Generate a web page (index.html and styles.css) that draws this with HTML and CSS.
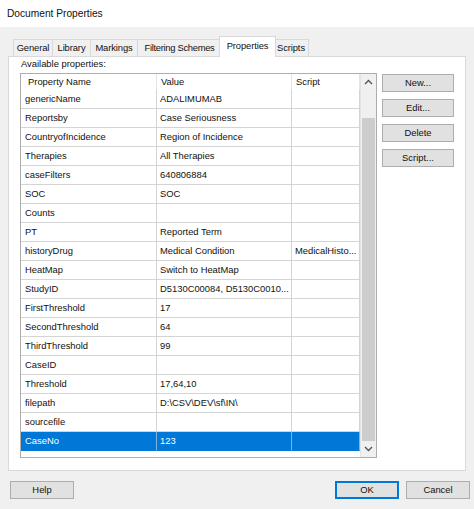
FILE: index.html
```html
<!DOCTYPE html>
<html>
<head>
<meta charset="utf-8">
<title>Document Properties</title>
<link rel="stylesheet" href="styles.css">
</head>
<body>
<div class="window">
  <div class="titlebar">Document Properties</div>
  <div class="dialog">
    <div class="tabs">
      <div class="tab tab-general">General</div>
      <div class="tab tab-library">Library</div>
      <div class="tab tab-markings">Markings</div>
      <div class="tab tab-filtering">Filtering Schemes</div>
      <div class="tab tab-properties active">Properties</div>
      <div class="tab tab-scripts">Scripts</div>
    </div>
    <div class="panel">
      <div class="label">Available properties:</div>
      <div class="content">
        <div class="list">
          <div class="grid">
            <div class="header">
              <div class="hcell">Property Name</div>
              <div class="hcell">Value</div>
              <div class="hcell">Script</div>
            </div>
            <div class="row"><div class="cell">genericName</div><div class="cell">ADALIMUMAB</div><div class="cell"></div></div>
            <div class="row"><div class="cell">Reportsby</div><div class="cell">Case Seriousness</div><div class="cell"></div></div>
            <div class="row"><div class="cell">CountryofIncidence</div><div class="cell">Region of Incidence</div><div class="cell"></div></div>
            <div class="row"><div class="cell">Therapies</div><div class="cell">All Therapies</div><div class="cell"></div></div>
            <div class="row"><div class="cell">caseFilters</div><div class="cell">640806884</div><div class="cell"></div></div>
            <div class="row"><div class="cell">SOC</div><div class="cell">SOC</div><div class="cell"></div></div>
            <div class="row"><div class="cell">Counts</div><div class="cell"></div><div class="cell"></div></div>
            <div class="row"><div class="cell">PT</div><div class="cell">Reported Term</div><div class="cell"></div></div>
            <div class="row"><div class="cell">historyDrug</div><div class="cell">Medical Condition</div><div class="cell">MedicalHisto...</div></div>
            <div class="row"><div class="cell">HeatMap</div><div class="cell">Switch to HeatMap</div><div class="cell"></div></div>
            <div class="row"><div class="cell">StudyID</div><div class="cell">D5130C00084, D5130C0010...</div><div class="cell"></div></div>
            <div class="row"><div class="cell">FirstThreshold</div><div class="cell">17</div><div class="cell"></div></div>
            <div class="row"><div class="cell">SecondThreshold</div><div class="cell">64</div><div class="cell"></div></div>
            <div class="row"><div class="cell">ThirdThreshold</div><div class="cell">99</div><div class="cell"></div></div>
            <div class="row"><div class="cell">CaseID</div><div class="cell"></div><div class="cell"></div></div>
            <div class="row"><div class="cell">Threshold</div><div class="cell">17,64,10</div><div class="cell"></div></div>
            <div class="row"><div class="cell">filepath</div><div class="cell">D:\CSV\DEV\sf\IN\</div><div class="cell"></div></div>
            <div class="row"><div class="cell">sourcefile</div><div class="cell"></div><div class="cell"></div></div>
            <div class="row selected"><div class="cell">CaseNo</div><div class="cell">123</div><div class="cell"></div></div>
          </div>
          <div class="scrollbar">
            <div class="arrow">
              <svg width="9" height="6" viewBox="0 0 9 6"><polyline points="1,5 4.5,1.5 8,5" fill="none" stroke="#505050" stroke-width="1.3"/></svg>
            </div>
            <div class="track"><div class="thumb"></div></div>
            <div class="arrow">
              <svg width="9" height="6" viewBox="0 0 9 6"><polyline points="1,1 4.5,4.5 8,1" fill="none" stroke="#505050" stroke-width="1.3"/></svg>
            </div>
          </div>
        </div>
        <div class="side-buttons">
          <div class="btn">New...</div>
          <div class="btn">Edit...</div>
          <div class="btn">Delete</div>
          <div class="btn">Script...</div>
        </div>
      </div>
    </div>
  </div>
  <div class="footer">
    <div class="btn wide">Help</div>
    <div class="spacer"></div>
    <div class="btn wide default">OK</div>
    <div class="btn wide">Cancel</div>
  </div>
</div>
</body>
</html>
```
FILE: styles.css
```css
* { box-sizing: border-box; }
html, body {
  margin: 0;
  padding: 0;
}
body {
  width: 474px;
  height: 509px;
  background: #f0f0f0;
  font-family: "Liberation Sans", Arial, sans-serif;
  font-size: 9.4px;
  color: #111;
  overflow: hidden;
}
.window {
  width: 474px;
  height: 509px;
  background: #f0f0f0;
}
.titlebar {
  height: 27px;
  line-height: 27px;
  background: #fff;
  padding-left: 7px;
  font-size: 10.2px;
  color: #111;
}
.dialog {
  padding: 9px 8px 0 8px;
}
.tabs {
  display: flex;
  height: 20px;
  padding-left: 5px;
  position: relative;
  z-index: 2;
}
.tab {
  margin-top: 3px;
  height: 17px;
  line-height: 16px;
  text-align: center;
  background: #f0f0f0;
  border: 1px solid #d9d9d9;
  border-bottom: none;
  margin-right: -1px;
  white-space: nowrap;
  letter-spacing: -0.1px;
}
.tab-general { width: 40px; }
.tab-library { width: 39px; }
.tab-markings { width: 48px; }
.tab-filtering { width: 85px; letter-spacing: -0.3px; }
.tab-properties { width: 53px; }
.tab-scripts { width: 36px; }
.tab.active {
  margin-top: 0;
  height: 21px;
  line-height: 18px;
  background: #fff;
  margin-left: -2px;
  margin-right: -3px;
  width: 57px;
  position: relative;
  z-index: 3;
}
.panel {
  position: relative;
  z-index: 1;
  height: 415px;
  background: #fff;
  border: 1px solid #d9d9d9;
  padding-left: 11px;
}
.label {
  height: 14px;
  line-height: 14px;
  padding-left: 1px;
  margin-bottom: 2px;
}
.content {
  display: flex;
  gap: 5px;
}
.list {
  width: 357px;
  height: 385px;
  border: 1px solid #adadad;
  display: flex;
  background: #fff;
}
.grid {
  width: 339px;
}
.header,
.row {
  display: grid;
  grid-template-columns: 136px 135px 68px;
}
.header {
  height: 16px;
}
.hcell {
  line-height: 15px;
  padding-left: 7px;
  border-right: 1px solid #e5e5e5;
  white-space: nowrap;
  overflow: hidden;
}
.hcell + .hcell { padding-left: 4px; }
.row {
  height: 19px;
}
.cell {
  height: 19px;
  line-height: 18px;
  padding-left: 4px;
  border-bottom: 1px solid #d4d4d4;
  border-right: 1px solid #d4d4d4;
  white-space: nowrap;
  overflow: hidden;
}
.cell + .cell { padding-left: 3px; }
.row.selected .cell {
  background: #0078d7;
  color: #fff;
  border-right-color: #7fb6e6;
  border-bottom-color: #0078d7;
}
.scrollbar {
  width: 16px;
  display: flex;
  flex-direction: column;
  background: #f0f0f0;
  border-left: 1px solid #e3e3e3;
}
.arrow {
  height: 17px;
  display: flex;
  align-items: center;
  justify-content: center;
}
.track {
  flex: 1;
  padding-top: 28px;
  padding-bottom: 0;
}
.thumb {
  margin: 0 1px;
  height: 323px;
  background: #cdcdcd;
}
.side-buttons {
  display: flex;
  flex-direction: column;
  gap: 7px;
  padding-top: 1px;
}
.btn {
  width: 72px;
  height: 18px;
  line-height: 16px;
  text-align: center;
  background: #e1e1e1;
  border: 1px solid #adadad;
}
.footer {
  display: flex;
  gap: 7px;
  padding: 10px 4px 0 10px;
}
.btn.wide { width: 64px; }
.btn.default {
  border: 1px solid #0078d7;
  box-shadow: inset 0 0 0 1px #0078d7;
}
.spacer { flex: 1; }
```
